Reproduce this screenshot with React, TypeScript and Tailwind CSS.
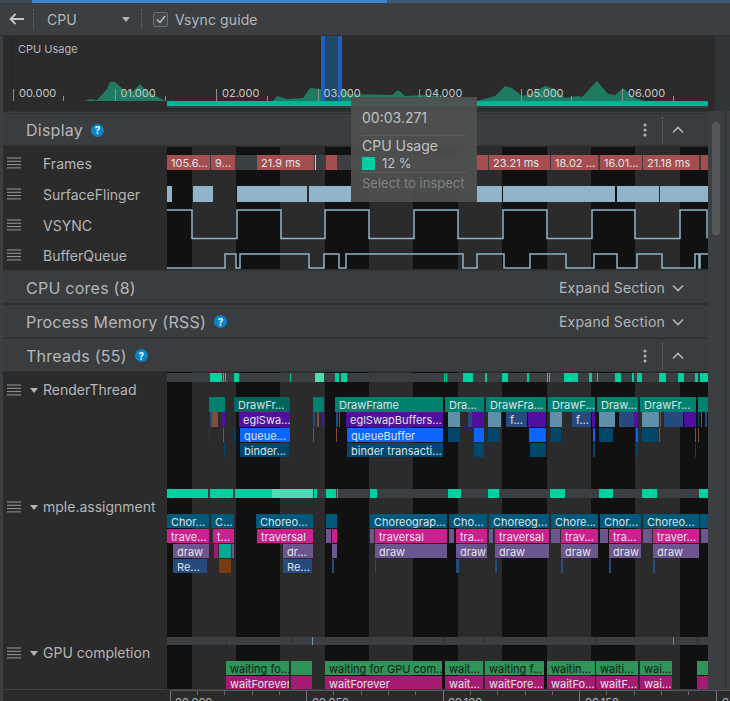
import * as React from 'react';

type Seg = [number, number, string, string?];

const BLACK_BANDS = [[167, 192], [236, 280], [325, 369], [413, 458], [502, 547], [591, 635], [680, 708]];
const TRACK_X = 167;

const TEAL = '#00cf9f';
const TEAL_LIGHT = '#4cdcb8';
const TEAL_DARK = '#00655b';
const TEAL_MID = '#00806e';
const PURPLE = '#4f0f9f';
const BLUE = '#0a66ff';
const DEEP = '#00476b';
const STEEL = '#5f8fa9';
const NAVY = '#264a7d';
const BROWN = '#7d4f3c';
const CHOREO = '#00587a';
const PINK = '#cb2190';
const VIOLET = '#6d5590';
const GREEN = '#2e9458';
const WAIT = '#a31c72';
const RED = '#a54e50';
const FLINGER = '#92b4c8';
const GAP = '#2e3133';

const FRAMES: Seg[] = [
  [167, 210, RED, '105.6...'], [211, 235, RED, '9...'], [257, 314, RED, '21.9 ms'], [315, 316, '#b8d4e0'],
  [326, 337, RED], [476, 488, RED], [489, 550, RED, '23.21 ms'], [551, 598, RED, '18.02 ...'],
  [600, 642, RED, '16.01...'], [643, 699, RED, '21.18 ms'], [701, 708, RED],
];

const FLINGER_BARS: Seg[] = [
  [167, 172, FLINGER], [193, 213, FLINGER], [237, 307, FLINGER], [309, 351, FLINGER],
  [477, 502, FLINGER], [503, 615, FLINGER], [617, 659, FLINGER], [660, 708, FLINGER],
];

const RENDER_STRIP: Seg[] = [
  [210, 222, TEAL], [223, 224, TEAL], [225, 226, TEAL], [234, 239, TEAL], [290, 291, TEAL], [315, 324, TEAL_LIGHT],
  [335, 339, TEAL], [341, 347, TEAL], [444, 445, TEAL], [446, 447, TEAL], [463, 473, TEAL], [485, 487, TEAL],
  [502, 508, TEAL], [527, 529, TEAL], [547, 548, TEAL], [549, 550, TEAL], [564, 578, TEAL], [589, 592, TEAL],
  [597, 598, TEAL], [615, 621, TEAL], [632, 634, TEAL], [637, 642, TEAL], [659, 666, TEAL], [678, 684, TEAL],
  [695, 698, TEAL], [700, 708, TEAL],
];

const RENDER_ROWS: Seg[][] = [
  [
    [209, 225, TEAL_MID], [234, 290, TEAL_DARK, 'DrawFr...'], [313, 324, TEAL_MID], [335, 443, TEAL_MID, 'DrawFrame'],
    [445, 484, TEAL_MID, 'Dra...'], [486, 546, TEAL_MID, 'DrawFra...'], [548, 595, TEAL_MID, 'DrawF...'],
    [597, 638, TEAL_MID, 'Draw...'], [640, 696, TEAL_MID, 'DrawFr...'], [698, 708, TEAL_MID],
  ],
  [
    [210, 212, NAVY], [212, 218, BROWN], [221, 225, PURPLE], [239, 290, PURPLE, 'eglSwa...'], [313, 315, NAVY],
    [317, 319, BROWN], [322, 324, PURPLE], [336, 338, NAVY], [339, 340, BROWN], [346, 443, PURPLE, 'eglSwapBuffers...'],
    [448, 460, STEEL], [468, 472, NAVY], [472, 484, PURPLE], [488, 501, STEEL], [506, 527, NAVY, 'f...'],
    [528, 546, PURPLE], [550, 562, STEEL], [572, 591, NAVY, 'f...'], [592, 595, PURPLE], [599, 615, STEEL],
    [619, 634, NAVY], [634, 638, PURPLE], [642, 659, STEEL], [660, 661, BROWN], [664, 683, NAVY], [684, 696, PURPLE],
    [698, 699, DEEP], [701, 702, BROWN], [705, 707, NAVY],
  ],
  [
    [209, 210, DEEP], [223, 224, BLUE], [234, 235, DEEP], [240, 290, BLUE, 'queue...'], [313, 314, BROWN], [336, 337, BROWN],
    [347, 443, BLUE, 'queueBuffer'], [448, 460, DEEP], [474, 484, BLUE], [488, 500, DEEP], [529, 546, BLUE],
    [551, 561, DEEP], [593, 595, BLUE], [599, 613, DEEP], [636, 638, BLUE], [642, 658, DEEP], [659, 660, VIOLET],
    [695, 696, BLUE], [698, 699, BROWN],
  ],
  [
    [224, 225, DEEP], [240, 289, DEEP, 'binder...'], [347, 443, DEEP, 'binder transacti...'], [474, 484, DEEP],
    [530, 546, DEEP], [593, 595, DEEP], [636, 638, DEEP], [695, 696, DEEP],
  ],
];

const MAIN_STRIP: Seg[] = [
  [167, 208, TEAL], [210, 233, TEAL], [235, 272, TEAL], [272, 313, TEAL_LIGHT], [314, 317, TEAL], [326, 336, TEAL],
  [337, 338, TEAL], [370, 377, TEAL], [448, 461, TEAL], [488, 499, TEAL], [550, 565, TEAL], [599, 613, TEAL],
  [642, 657, TEAL], [699, 708, TEAL],
];

const MAIN_ROWS: Seg[][] = [
  [
    [167, 209, CHOREO, 'Chor...'], [211, 234, CHOREO, 'C...'], [256, 313, CHOREO, 'Choreo...'], [326, 337, CHOREO],
    [370, 447, CHOREO, 'Choreograp...'], [449, 487, CHOREO, 'Cho...'], [489, 549, CHOREO, 'Choreog...'],
    [551, 598, CHOREO, 'Chore...'], [600, 641, CHOREO, 'Chor...'], [643, 699, CHOREO, 'Choreo...'], [700, 708, CHOREO],
  ],
  [
    [167, 209, PINK, 'trave...'], [213, 234, PINK, 't...'], [257, 313, PINK, 'traversal'], [326, 331, VIOLET], [332, 337, PINK],
    [370, 374, VIOLET], [375, 447, PINK, 'traversal'], [449, 454, VIOLET], [456, 487, PINK, 'tra...'], [489, 493, VIOLET],
    [495, 549, PINK, 'traversal'], [551, 560, VIOLET], [561, 598, PINK, 'trav...'], [600, 608, VIOLET],
    [609, 641, PINK, 'tra...'], [643, 652, VIOLET], [653, 699, PINK, 'traver...'], [701, 708, VIOLET],
  ],
  [
    [173, 209, VIOLET, 'draw'], [214, 218, '#a01c78'], [219, 231, '#00a896'], [232, 234, VIOLET], [283, 313, VIOLET, 'dr...'],
    [332, 337, VIOLET], [375, 447, VIOLET, 'draw'], [456, 487, VIOLET, 'draw'], [495, 549, VIOLET, 'draw'],
    [561, 598, VIOLET, 'draw'], [609, 641, VIOLET, 'draw'], [653, 699, VIOLET, 'draw'],
  ],
  [
    [173, 207, NAVY, 'Re...'], [219, 231, '#7a3b10'], [283, 312, NAVY, 'Re...'], [332, 334, NAVY], [375, 376, NAVY],
    [456, 459, NAVY], [495, 497, NAVY], [561, 563, NAVY], [609, 611, NAVY], [653, 655, NAVY],
  ],
];

const GPU_STRIP: Seg[] = [
  [226, 227, GAP], [291, 292, GAP], [312, 313, '#6f98a8'], [443, 444, GAP], [484, 485, GAP], [596, 597, GAP],
  [673, 674, '#00b49a'], [697, 698, GAP],
];

const GPU_ROWS: Seg[][] = [
  [
    [226, 289, GREEN, 'waiting fo...'], [291, 312, GREEN], [325, 442, GREEN, 'waiting for GPU com...'], [445, 483, GREEN, 'wait...'],
    [485, 544, GREEN, 'waiting f...'], [547, 595, GREEN, 'waitin...'], [596, 638, GREEN, 'waiti...'], [640, 672, GREEN, 'wai...'], [697, 708, GREEN],
  ],
  [
    [226, 289, WAIT, 'waitForever'], [291, 312, WAIT], [325, 442, WAIT, 'waitForever'], [445, 483, WAIT, 'wait...'],
    [485, 544, WAIT, 'waitFore...'], [547, 595, WAIT, 'waitFo...'], [596, 638, WAIT, 'waitF...'], [640, 672, WAIT, 'wai...'], [697, 708, WAIT],
  ],
];

function Stripes() {
  return (
    <>
      {BLACK_BANDS.map(([a, b]) => (
        <div key={a} className="absolute inset-y-0 bg-[#111111]" style={{ left: a - TRACK_X, width: b - a }} />
      ))}
    </>
  );
}

function Bars({ segs, top, height, dark }: { segs: Seg[]; top: number; height: number; dark?: boolean }) {
  return (
    <>
      {segs.map(([a, b, color, text]) => (
        <div
          key={a}
          className={`absolute overflow-hidden whitespace-nowrap text-[11px] ${text ? 'pl-[4px]' : ''} ${dark ? 'text-[#0c1f14]' : 'text-[#dfe3e6]'}`}
          style={{ left: a - TRACK_X, width: b - a, top, height, lineHeight: `${height + 2}px`, backgroundColor: color }}
        >
          {text}
        </div>
      ))}
    </>
  );
}

function Hamburger() {
  return (
    <svg width="14" height="12" viewBox="0 0 14 12" className="shrink-0" stroke="#9a9a9a" strokeWidth="1">
      <path d="M0 1h14M0 4.3h14M0 7.6h14M0 10.9h14" />
    </svg>
  );
}

function Caret({ className }: { className?: string }) {
  return (
    <svg width="8" height="5" viewBox="0 0 8 5" className={className} fill="#b4b4b4">
      <path d="M0 0h8L4 5z" />
    </svg>
  );
}

function Help() {
  return (
    <span className="ml-[8px] flex size-[13px] items-center justify-center rounded-full bg-[#0a84c6] text-[10px] font-bold leading-none text-[#e8f4fa]">
      ?
    </span>
  );
}

function DottedSep({ className }: { className?: string }) {
  return <div className={`w-0 border-l border-dotted border-[#6a6d70] ${className ?? ''}`} />;
}

function ChevronIcon({ up }: { up?: boolean }) {
  return (
    <svg width="12" height="8" viewBox="0 0 12 8" fill="none" stroke="#b4b4b4" strokeWidth="1.6">
      <path d={up ? 'M1 6.5 6 1.5l5 5' : 'M1 1.5l5 5 5-5'} />
    </svg>
  );
}

function Kebab() {
  return (
    <svg width="4" height="14" viewBox="0 0 4 14" fill="#b4b4b4">
      <circle cx="2" cy="2" r="1.5" />
      <circle cx="2" cy="7" r="1.5" />
      <circle cx="2" cy="12" r="1.5" />
    </svg>
  );
}

function Section({ title, help, mode, height }: { title: string; help?: boolean; mode: 'open' | 'closed'; height: number }) {
  return (
    <div className="flex items-center bg-[#3a3d40] pl-[23px] pr-[24px] pt-[1px]" style={{ height }}>
      <span className="text-[16px] tracking-[0.25px] text-[#b4b6b8]">{title}</span>
      {help && <Help />}
      <div className="flex-1" />
      {mode === 'closed' ? (
        <>
          <span className="text-[14px] tracking-[0.2px] text-[#b4b6b8]">Expand Section</span>
          <span className="ml-[7px] flex"><ChevronIcon /></span>
        </>
      ) : (
        <>
          <Kebab />
          <DottedSep className="ml-[15px] mr-[9px] h-[26px]" />
          <ChevronIcon up />
        </>
      )}
    </div>
  );
}

function Track({ label, height, children }: { label: string; height: number; children: React.ReactNode }) {
  return (
    <div className="flex" style={{ height }}>
      <div className="flex w-[164px] items-center gap-[22px] pl-[4px] pt-[1px]">
        <Hamburger />
        <span className="text-[14px] text-[#b4b6b8]">{label}</span>
      </div>
      <div className="relative flex-1 overflow-hidden bg-[#2b2b2b]">
        <Stripes />
        {children}
      </div>
    </div>
  );
}

function ThreadTrack({ label, labelTop, height, strip, stripTop, stripH, rows, rowTop, rowStep, rowH, dark }: {
  label: string;
  labelTop: number;
  height: number;
  strip: Seg[];
  stripTop: number;
  stripH: number;
  rows: Seg[][];
  rowTop: number;
  rowStep: number;
  rowH: number;
  dark?: boolean;
}) {
  return (
    <div className="flex" style={{ height }}>
      <div className="w-[164px]">
        <div className="flex items-center pl-[4px]" style={{ paddingTop: labelTop }}>
          <Hamburger />
          <Caret className="ml-[9px] mr-[5px] shrink-0" />
          <span className="text-[14px] leading-[18px] text-[#b4b6b8]">{label}</span>
        </div>
      </div>
      <div className="relative flex-1 overflow-hidden bg-[#2b2b2b]">
        <Stripes />
        <div className="absolute inset-x-0 bg-[#3c3f41]" style={{ top: stripTop, height: stripH }} />
        <Bars segs={strip} top={stripTop} height={stripH} />
        {rows.map((segs, i) => (
          <Bars key={i} segs={segs} top={rowTop + rowStep * i} height={rowH} dark={dark && i === 0} />
        ))}
      </div>
    </div>
  );
}

function Overview() {
  const labels = ['00.000', '01.000', '02.000', '03.000', '04.000', '05.000', '06.000'];
  return (
    <div className="relative h-[75px] bg-[#2b2b2b]">
      <div className="absolute inset-y-0 left-0 w-[3px] bg-[#3c3f41]" />
      <div className="absolute inset-y-0 left-[12px] w-px bg-[#262626]" />
      <div className="absolute inset-y-0 right-0 w-[15px] bg-[#323537]" />
      <span className="absolute left-[18px] top-[5px] text-[11px] text-[#b4b6b8]">CPU Usage</span>
      {/* usage chart, axis ticks and selection */}
      <svg width="730" height="75" className="absolute left-0 top-0">
        <path
          fill="#1f7a62"
          d="M85 65L90 63L97 64L107 53L110 46L115 46L125 55L133 55L140 48L147 55L165 65ZM273 65L277 60L287 63L303 62L310 52L320 53L333 56L343 53L351 58L392 59L398 54L405 60L425 59L477 65L495 60L505 50L512 52L522 60L532 57L545 50L555 53L565 62L578 60L582 61L597 45L608 58L615 59L623 52L635 62L645 65Z"
        />
        <path
          stroke="#8f9294"
          d="M13.500 53V65M115.500 53V65M216.500 53V65M318.500 53V65M419.500 53V65M521.500 53V65M622.500 53V65M63.500 60V65M165.500 60V65M267.500 60V65M571.500 60V65M673.500 60V65"
        />
        <rect x="321" y="0" width="21" height="65" fill="#1e4c70" fillOpacity="0.9" />
        <rect x="321" y="0" width="4" height="65" fill="#1f5fc0" />
        <rect x="338" y="0" width="4" height="65" fill="#1f5fc0" />
      </svg>
      {labels.map((t, i) => (
        <span key={t} className="absolute top-[49px] text-[11px] leading-[16px] text-[#c4c6c8]" style={{ left: 19 + i * 101.5 }}>{t}</span>
      ))}
      <div className="absolute left-[167px] top-[65px] h-[5px] w-[541px] bg-[#00b49a]" />
      <div className="absolute left-[167px] top-[70px] h-[2px] w-[541px] bg-[#3c3f41]" />
    </div>
  );
}

function Tooltip() {
  return (
    <div className="absolute left-[351px] top-[97px] z-10 h-[105px] w-[126px] bg-[#4e5050]/95 px-[11px] pt-[12px]">
      <div className="text-[14px] leading-[18px] text-[#bfc1c2]">00:03.271</div>
      <div className="mt-[8px] h-px bg-[#5c5e5e]" />
      <div className="mt-[1px] text-[14px] leading-[18px] text-[#bfc1c2]">CPU Usage</div>
      <div className="mt-[2px] flex h-[13px] items-center gap-[7px]">
        <span className="size-[13px] bg-[#00cf9f]" />
        <span className="text-[13px] text-[#bfc1c2]">12 %</span>
      </div>
      <div className="mt-[2px] h-px bg-[#5c5e5e]" />
      <div className="mt-[1px] whitespace-nowrap text-[13px] leading-[18px] text-[#7f8181]">Select to inspect</div>
    </div>
  );
}

function VsyncLine({ d }: { d: string }) {
  return (
    <svg width="541" height="31" className="absolute left-0 top-0">
      <path d={d} fill="none" stroke="#8fb3c7" strokeWidth="1.500" />
    </svg>
  );
}

function Ruler() {
  const major = [167, 303, 440, 576, 713];
  const minor = [194, 221, 249, 276, 330, 358, 385, 412, 467, 494, 522, 549, 603, 631, 658, 685];
  const labels: [number, string][] = [[172, '00.000'], [309, '00.050'], [445, '00.100'], [582, '00.150'], [719, '0']];
  return (
    <div className="relative ml-[167px] h-[11px] w-[563px] overflow-hidden border-t border-[#555555] bg-[#2b2b2b]">
      {major.map((x) => (
        <div key={x} className="absolute top-0 h-[11px] w-px bg-[#777777]" style={{ left: x - TRACK_X }} />
      ))}
      {minor.map((x) => (
        <div key={x} className="absolute top-0 h-[4px] w-px bg-[#666666]" style={{ left: x - TRACK_X }} />
      ))}
      {labels.map(([x, t]) => (
        <span key={x} className="absolute top-[3px] text-[11px] leading-[16px] text-[#b4b6b8]" style={{ left: x - TRACK_X }}>{t}</span>
      ))}
    </div>
  );
}

export default function App() {
  return (
    <div className="relative h-[701px] w-[730px] overflow-hidden bg-[#3c3f41] font-['Inter',sans-serif]">
      {/* tab indicator */}
      <div className="flex h-[3px] bg-[#3f5a70]">
        <div className="w-[32px] bg-[#3c4a56]" />
        <div className="w-[355px] bg-[#3d85c6]" />
      </div>

      {/* toolbar */}
      <div className="flex h-[33px] items-center border-b border-[#2f3133] pl-[9px]">
        <svg width="15" height="12" viewBox="0 0 15 12" fill="none" stroke="#c4c6c8" strokeWidth="1.800">
          <path d="M15 6H1.500M6.500 1 1.500 6l5 5" />
        </svg>
        <DottedSep className="ml-[9px] h-[20px]" />
        <span className="ml-[13px] w-[75px] text-[14px] text-[#b4b6b8]">CPU</span>
        <Caret />
        <DottedSep className="ml-[11px] h-[20px]" />
        <span className="ml-[11px] flex size-[15px] items-center justify-center rounded-[2px] border border-[#6a6d70] bg-[#43474a]">
          <svg width="10" height="9" viewBox="0 0 10 9" fill="none" stroke="#c4c6c8" strokeWidth="1.400">
            <path d="M1 4.500 4 7.500 9 1" />
          </svg>
        </span>
        <span className="ml-[7px] text-[14px] tracking-[0.1px] text-[#b4b6b8]">Vsync guide</span>
      </div>

      <Overview />

      <div className="flex">
        <div className="w-[708px] pl-[3px]">
          <div className="h-px bg-[#2f3133]" />
          <div className="h-[1px] bg-[#3c3f41]" />
          <div className="h-px bg-[#2f3133]" />
          <Section title="Display" help mode="open" height={31} />
          <div className="h-[2px] bg-[#2b2d2f]" />

          <div className="bg-[#2b2b2b]">
            <Track label="Frames" height={31}>
              <div className="absolute inset-x-0 top-[8px] h-[15px] bg-[#3c3f41]" />
              <Bars segs={FRAMES} top={8} height={15} />
            </Track>
            <Track label="SurfaceFlinger" height={31}>
              <Bars segs={FLINGER_BARS} top={8} height={16} />
            </Track>
            <Track label="VSYNC" height={31}>
              <VsyncLine d="M0 1H25V29.500H70V1H114V29.500H158V1H202V29.500H247V1H291V29.500H336V1H380V29.500H425V1H468V29.500H513V1H540V29.500" />
            </Track>
            <Track label="BufferQueue" height={29}>
              <VsyncLine d="M0 28H58V14H69V28H73V14H142V28H157V14H172V28H179V14H296V28H310V14H337V28H363V14H399V28H427V14H450V28H470V14H495V28H528V14H532V28H533V14H541" />
            </Track>
          </div>

          <div className="h-[2px] bg-[#2f3133]" />
          <Section title="CPU cores (8)" mode="closed" height={32} />
          <div className="h-[2px] bg-[#2f3133]" />
          <Section title="Process Memory (RSS)" help mode="closed" height={32} />
          <div className="h-[2px] bg-[#2f3133]" />
          <Section title="Threads (55)" help mode="open" height={32} />
          <div className="h-px bg-[#2f3133]" />

          <div className="bg-[#2b2b2b]">
            <ThreadTrack label="RenderThread" labelTop={9} height={114} strip={RENDER_STRIP} stripTop={1} stripH={9} rows={RENDER_ROWS} rowTop={25} rowStep={15.300} rowH={14.500} />
            <ThreadTrack label="mple.assignment" labelTop={12} height={150} strip={MAIN_STRIP} stripTop={3} stripH={9} rows={MAIN_ROWS} rowTop={28} rowStep={15} rowH={14} />
            <ThreadTrack label="GPU completion" labelTop={8} height={53} strip={GPU_STRIP} stripTop={1} stripH={8} rows={GPU_ROWS} rowTop={25} rowStep={15} rowH={14} dark />
          </div>
        </div>

        {/* scrollbar */}
        <div className="relative flex-1 bg-[#3c3f41]">
          <div className="absolute left-[4px] top-[11px] h-[113px] w-[8px] rounded-full bg-[#55585a]" />
          <div className="absolute inset-y-0 left-[17px] w-px bg-[#2f3133]" />
        </div>
      </div>

      <div className="absolute bottom-0 left-[3px] right-0 bg-[#2b2b2b]">
        <Ruler />
      </div>

      <Tooltip />
    </div>
  );
}
